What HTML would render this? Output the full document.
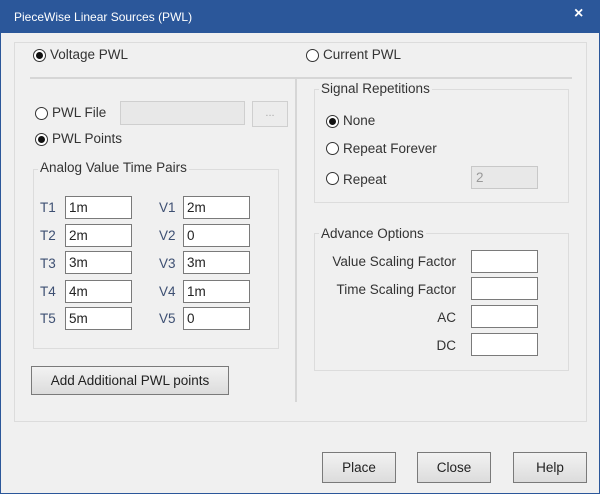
<!DOCTYPE html>
<html><head><style>
*{box-sizing:border-box;margin:0;padding:0}
body{width:600px;height:494px;background:#f0f0f0;font-family:"Liberation Sans",sans-serif;font-size:13px;color:#333;position:relative;overflow:hidden}
.a{position:absolute}
.win{left:0;top:0;width:600px;height:494px;border:1px solid #2b579a;border-top:none}
.title{left:0;top:0;width:600px;height:33px;background:#2b579a;color:#fff;font-size:12px}
.grp{border:1px solid #dcdcdc}
.lbl{background:#f0f0f0;padding:0 2px;font-size:13.5px;color:#333;white-space:nowrap}
.t{white-space:nowrap;font-size:13.5px}
.r{width:13px;height:13px;border:1px solid #333;border-radius:50%;background:#fff}
.r.on::after{content:"";position:absolute;left:2px;top:2px;width:7px;height:7px;border-radius:50%;background:#111}
.box{background:#fff;border:1px solid #7a7a7a;font-size:13.5px;padding:3px 0 0 3px;color:#222}
.btn{background:linear-gradient(#f2f2f2,#dcdcdc);border:1px solid #7a7a7a;text-align:center;font-size:13.5px;color:#222}
.tl{color:#3d4f72;font-size:13.5px}
</style></head><body>
<div class="a win"></div>
<div class="a title"><span class="a" style="left:14px;top:10px">PieceWise Linear Sources (PWL)</span><span class="a" style="left:574px;top:5px;font-size:16px;font-weight:bold">×</span></div>

<div class="a grp" style="left:14px;top:42px;width:573px;height:380px"></div>
<div class="a r on" style="left:33px;top:49px"></div><span class="a t" style="left:50px;top:47px">Voltage PWL</span>
<div class="a r" style="left:306px;top:49px"></div><span class="a t" style="left:323px;top:47px">Current PWL</span>
<div class="a" style="left:30px;top:77px;width:542px;height:2px;background:#d6d6d6"></div>
<div class="a" style="left:295px;top:79px;width:2px;height:323px;background:#d6d6d6"></div>

<div class="a r" style="left:35px;top:107px"></div><span class="a t" style="left:52px;top:105px">PWL File</span>
<div class="a" style="left:120px;top:101px;width:125px;height:24px;background:#e8e8e8;border:1px solid #cfcfcf"></div>
<div class="a" style="left:252px;top:101px;width:36px;height:26px;background:#ececec;border:1px solid #cfcfcf;color:#aaa;text-align:center;font-size:11px;line-height:22px">...</div>
<div class="a r on" style="left:35px;top:133px"></div><span class="a t" style="left:52px;top:131px">PWL Points</span>

<div class="a grp" style="left:33px;top:169px;width:246px;height:180px"></div>
<span class="a lbl" style="left:38px;top:160px">Analog Value Time Pairs</span>

<span class="a tl" style="left:40px;top:200px">T1</span><div class="a box" style="left:65px;top:196px;width:67px;height:23px">1m</div>
<span class="a tl" style="left:159px;top:200px">V1</span><div class="a box" style="left:183px;top:196px;width:67px;height:23px">2m</div>
<span class="a tl" style="left:40px;top:228px">T2</span><div class="a box" style="left:65px;top:224px;width:67px;height:23px">2m</div>
<span class="a tl" style="left:159px;top:228px">V2</span><div class="a box" style="left:183px;top:224px;width:67px;height:23px">0</div>
<span class="a tl" style="left:40px;top:256px">T3</span><div class="a box" style="left:65px;top:251px;width:67px;height:23px">3m</div>
<span class="a tl" style="left:159px;top:256px">V3</span><div class="a box" style="left:183px;top:251px;width:67px;height:23px">3m</div>
<span class="a tl" style="left:40px;top:284px">T4</span><div class="a box" style="left:65px;top:280px;width:67px;height:23px">4m</div>
<span class="a tl" style="left:159px;top:284px">V4</span><div class="a box" style="left:183px;top:280px;width:67px;height:23px">1m</div>
<span class="a tl" style="left:40px;top:311px">T5</span><div class="a box" style="left:65px;top:307px;width:67px;height:23px">5m</div>
<span class="a tl" style="left:159px;top:311px">V5</span><div class="a box" style="left:183px;top:307px;width:67px;height:23px">0</div>

<div class="a btn" style="left:31px;top:366px;width:198px;height:29px;line-height:27px">Add Additional PWL points</div>

<div class="a grp" style="left:314px;top:89px;width:255px;height:114px"></div>
<span class="a lbl" style="left:319px;top:81px">Signal Repetitions</span>
<div class="a r on" style="left:326px;top:115px"></div><span class="a t" style="left:343px;top:113px">None</span>
<div class="a r" style="left:326px;top:142px"></div><span class="a t" style="left:343px;top:141px">Repeat Forever</span>
<div class="a r" style="left:326px;top:172px"></div><span class="a t" style="left:343px;top:172px">Repeat</span>
<div class="a" style="left:471px;top:166px;width:67px;height:23px;background:#e8e8e8;border:1px solid #c8c8c8;color:#999;font-size:13.5px;padding:3px 0 0 4px">2</div>

<div class="a grp" style="left:314px;top:233px;width:255px;height:138px"></div>
<span class="a lbl" style="left:319px;top:226px">Advance Options</span>
<span class="a t" style="right:144px;top:254px">Value Scaling Factor</span><div class="a box" style="left:471px;top:250px;width:67px;height:23px"></div>
<span class="a t" style="right:144px;top:282px">Time Scaling Factor</span><div class="a box" style="left:471px;top:277px;width:67px;height:23px"></div>
<span class="a t" style="right:144px;top:310px">AC</span><div class="a box" style="left:471px;top:305px;width:67px;height:23px"></div>
<span class="a t" style="right:144px;top:338px">DC</span><div class="a box" style="left:471px;top:333px;width:67px;height:23px"></div>

<div class="a btn" style="left:322px;top:452px;width:74px;height:31px;line-height:29px">Place</div>
<div class="a btn" style="left:417px;top:452px;width:74px;height:31px;line-height:29px">Close</div>
<div class="a btn" style="left:513px;top:452px;width:74px;height:31px;line-height:29px">Help</div>
</body></html>
